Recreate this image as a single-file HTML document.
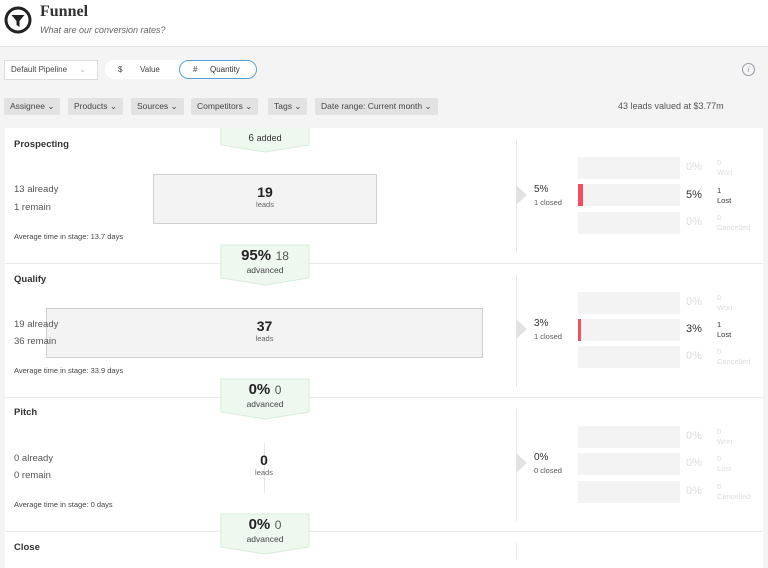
<!DOCTYPE html>
<html><head><meta charset="utf-8"><style>
*{box-sizing:border-box;margin:0;padding:0}
body{width:768px;height:559px;overflow:hidden;background:#f4f4f4;font-family:"Liberation Sans",sans-serif;color:#333;position:relative}
.a{position:absolute}
.hdr{left:0;top:0;width:768px;height:47px;background:#fff;border-bottom:1px solid #e6e6e6}
.chip{top:98px;height:17px;background:#e2e2e2;font-size:8.5px;color:#444;line-height:17px;padding:0 6px;border-radius:2px}
.card{left:5px;top:128px;width:758px;height:440px;background:#fff}
.sep{left:5px;width:758px;height:1px;background:#eaeaea}
.vl{left:516px;width:1px;background:#e6e6e6}
.t{font-size:9.5px;color:#333;font-weight:bold}
.sm{font-size:9.5px;color:#555;z-index:2}
.xs{font-size:7.5px;color:#444}
.bar{left:578px;width:102px;height:22px;background:#f3f3f4}
.pg{font-size:11px;color:#ddd;left:686px}
.lb{font-size:7.5px;color:#ddd;left:717px;line-height:10px}
.box{background:#f3f3f4;border:1px solid #cfcfcf;text-align:center;z-index:1}
.arr{left:221px;width:88px;background:#eef8ef;border:1px solid #d8eddb;border-bottom:none;text-align:center}
</style></head><body>
<div class="a hdr"></div>
<svg class="a" style="left:4px;top:6px" width="28" height="28" viewBox="0 0 28 28"><circle cx="14" cy="14" r="12" fill="none" stroke="#222" stroke-width="3"/><path d="M7.5 9h13l-5 6v6l-3-2v-4z" fill="#222"/></svg>
<div class="a" style="left:40px;top:3px;font-family:'Liberation Serif',serif;font-weight:bold;font-size:16px;color:#333">Funnel</div>
<div class="a" style="left:40px;top:25px;font-size:9px;font-style:italic;color:#666">What are our conversion rates?</div>

<div class="a" style="left:4px;top:60px;width:94px;height:20px;background:#fff;border:1px solid #ddd;font-size:8px;color:#444;line-height:18px;padding-left:6px">Default Pipeline <span style="color:#bbb;margin-left:10px">&#8964;</span></div>
<div class="a" style="left:105px;top:60px;width:153px;height:19px;background:#fff;border-radius:10px"></div>
<div class="a" style="left:118px;top:65px;font-size:8px;color:#444">$</div>
<div class="a" style="left:140px;top:65px;font-size:8px;color:#444">Value</div>
<div class="a" style="left:179px;top:60px;width:78px;height:19px;border:1px solid #5a9fd4;border-radius:10px;background:#fff"></div>
<div class="a" style="left:193px;top:65px;font-size:8px;color:#444">#</div>
<div class="a" style="left:210px;top:65px;font-size:8px;color:#333">Quantity</div>
<div class="a" style="left:742px;top:63px;width:13px;height:13px;border:1px solid #99a;border-radius:50%;font-size:8px;color:#99a;text-align:center;line-height:11px;font-style:italic">i</div>

<div class="a chip" style="left:4px">Assignee ⌄</div>
<div class="a chip" style="left:68px">Products ⌄</div>
<div class="a chip" style="left:131px">Sources ⌄</div>
<div class="a chip" style="left:191px">Competitors ⌄</div>
<div class="a chip" style="left:268px">Tags ⌄</div>
<div class="a chip" style="left:315px">Date range: Current month ⌄</div>
<div class="a" style="left:618px;top:101px;font-size:9px;color:#555">43 leads valued at $3.77m</div>

<div class="a card"></div>
<div class="a sep" style="top:263px"></div>
<div class="a sep" style="top:397px"></div>
<div class="a sep" style="top:531px"></div>
<div class="a vl" style="top:140px;height:112px"></div>
<div class="a vl" style="top:275px;height:112px"></div>
<div class="a vl" style="top:409px;height:112px"></div>
<div class="a vl" style="top:543px;height:16px"></div>

<!-- Prospecting -->
<div class="a t" style="left:14px;top:139px">Prospecting</div>
<div class="a sm" style="left:14px;top:184px">13 already</div>
<div class="a sm" style="left:14px;top:202px">1 remain</div>
<div class="a xs" style="left:14px;top:232px">Average time in stage: 13.7 days</div>
<div class="a box" style="left:153px;top:174px;width:224px;height:50px"><div style="font-size:14px;font-weight:bold;margin-top:9px;color:#222">19</div><div style="font-size:7.5px;color:#666">leads</div></div>

<!-- Qualify -->
<div class="a t" style="left:14px;top:274px">Qualify</div>
<div class="a sm" style="left:14px;top:319px">19 already</div>
<div class="a sm" style="left:14px;top:336px">36 remain</div>
<div class="a xs" style="left:14px;top:366px">Average time in stage: 33.9 days</div>
<div class="a box" style="left:46px;top:308px;width:437px;height:50px;background:transparent"><div style="font-size:14px;font-weight:bold;margin-top:9px;color:#222">37</div><div style="font-size:7.5px;color:#666">leads</div></div>
<div class="a" style="left:47px;top:309px;width:435px;height:48px;background:#f3f3f4;z-index:0"></div>

<!-- Pitch -->
<div class="a t" style="left:14px;top:407px">Pitch</div>
<div class="a sm" style="left:14px;top:453px">0 already</div>
<div class="a sm" style="left:14px;top:470px">0 remain</div>
<div class="a xs" style="left:14px;top:500px">Average time in stage: 0 days</div>
<div class="a" style="left:264px;top:443px;width:1px;height:50px;background:#e6e6e6"></div>
<div class="a" style="left:214px;top:452px;width:100px;text-align:center"><div style="font-size:14px;font-weight:bold;color:#222">0</div><div style="font-size:7.5px;color:#666">leads</div></div>

<div class="a t" style="left:14px;top:542px">Close</div>

<!-- arrows -->
<svg class="a" style="left:220px;top:128px" width="90" height="26"><path d="M1 0V17L45 24L89 17V0" fill="#eef8ef" stroke="#d6ecd9"/></svg>
<div class="a" style="left:221px;top:133px;width:88px;text-align:center;font-size:10px;color:#333">6 <span style="font-size:9px">added</span></div>

<svg class="a" style="left:220px;top:244px;z-index:3" width="90" height="43"><path d="M1 1H89V34L45 41L1 34Z" fill="#eef8ef" stroke="#d6ecd9"/></svg>
<div class="a" style="left:221px;top:247px;width:88px;text-align:center;z-index:4"><span style="font-size:15px;font-weight:bold;color:#222">95%</span> <span style="font-size:12px;color:#555">18</span><div style="font-size:8.5px;color:#444;margin-top:0">advanced</div></div>

<svg class="a" style="left:220px;top:378px;z-index:3" width="90" height="43"><path d="M1 1H89V34L45 41L1 34Z" fill="#eef8ef" stroke="#d6ecd9"/></svg>
<div class="a" style="left:221px;top:381px;width:88px;text-align:center;z-index:4"><span style="font-size:15px;font-weight:bold;color:#222">0%</span> <span style="font-size:12px;color:#555">0</span><div style="font-size:8.5px;color:#444">advanced</div></div>

<svg class="a" style="left:220px;top:513px" width="90" height="43"><path d="M1 1H89V34L45 41L1 34Z" fill="#eef8ef" stroke="#d6ecd9"/></svg>
<div class="a" style="left:221px;top:516px;width:88px;text-align:center"><span style="font-size:15px;font-weight:bold;color:#222">0%</span> <span style="font-size:12px;color:#555">0</span><div style="font-size:8.5px;color:#444">advanced</div></div>

<!-- right side: Prospecting -->
<svg class="a" style="left:516px;top:185px" width="12" height="20"><path d="M0 0L11 10L0 20Z" fill="#e2e2e2"/></svg>
<div class="a" style="left:534px;top:184px;font-size:10px;color:#333">5%</div>
<div class="a xs" style="left:534px;top:198px;color:#555">1 closed</div>
<div class="a bar" style="top:157px"></div><div class="a pg" style="top:161px">0%</div><div class="a lb" style="top:158px">0<br>Won</div>
<div class="a bar" style="top:184px"></div><div class="a" style="left:578px;top:184px;width:5px;height:22px;background:#f0505e"></div><div class="a pg" style="top:189px;color:#333">5%</div><div class="a lb" style="top:186px;color:#333">1<br>Lost</div>
<div class="a bar" style="top:212px"></div><div class="a pg" style="top:216px">0%</div><div class="a lb" style="top:213px">0<br>Cancelled</div>

<!-- Qualify right -->
<svg class="a" style="left:516px;top:319px" width="12" height="20"><path d="M0 0L11 10L0 20Z" fill="#e2e2e2"/></svg>
<div class="a" style="left:534px;top:318px;font-size:10px;color:#333">3%</div>
<div class="a xs" style="left:534px;top:332px;color:#555">1 closed</div>
<div class="a bar" style="top:292px"></div><div class="a pg" style="top:296px">0%</div><div class="a lb" style="top:293px">0<br>Won</div>
<div class="a bar" style="top:319px"></div><div class="a" style="left:578px;top:319px;width:3px;height:22px;background:#f0505e"></div><div class="a pg" style="top:323px;color:#333">3%</div><div class="a lb" style="top:320px;color:#333">1<br>Lost</div>
<div class="a bar" style="top:346px"></div><div class="a pg" style="top:350px">0%</div><div class="a lb" style="top:347px">0<br>Cancelled</div>

<!-- Pitch right -->
<svg class="a" style="left:516px;top:453px" width="12" height="20"><path d="M0 0L11 10L0 20Z" fill="#e2e2e2"/></svg>
<div class="a" style="left:534px;top:452px;font-size:10px;color:#333">0%</div>
<div class="a xs" style="left:534px;top:466px;color:#555">0 closed</div>
<div class="a bar" style="top:426px"></div><div class="a pg" style="top:430px">0%</div><div class="a lb" style="top:427px">0<br>Won</div>
<div class="a bar" style="top:453px"></div><div class="a pg" style="top:457px">0%</div><div class="a lb" style="top:454px">0<br>Lost</div>
<div class="a bar" style="top:481px"></div><div class="a pg" style="top:485px">0%</div><div class="a lb" style="top:482px">0<br>Cancelled</div>
</body></html>
